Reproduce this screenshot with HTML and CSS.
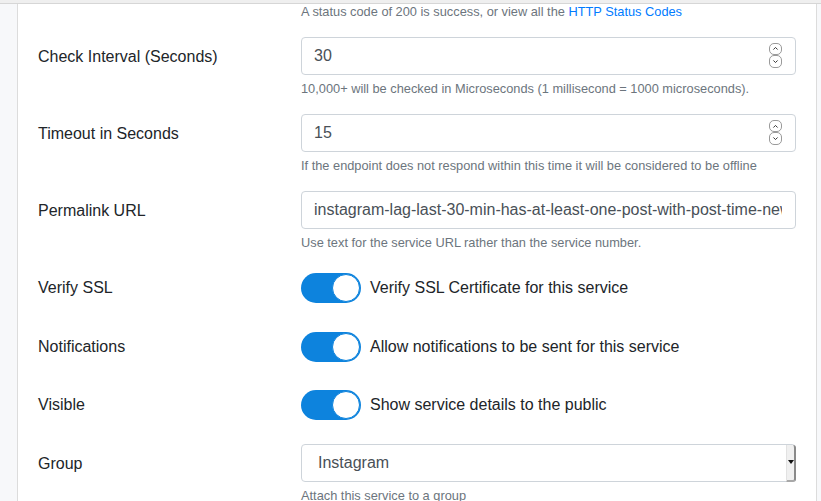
FILE: index.html
```html
<!DOCTYPE html>
<html>
<head>
<meta charset="utf-8">
<link rel="stylesheet" href="styles.css">
</head>
<body>
<div class="topbar"></div>
<div class="page">
  <div class="gutter"></div>
  <div class="card">
    <div class="row">
      <div class="label"></div>
      <div class="control">
        <small class="help first">A status code of 200 is success, or view all the <a href="#" class="link">HTTP Status Codes</a></small>
      </div>
    </div>

    <div class="row">
      <label class="label">Check Interval (Seconds)</label>
      <div class="control">
        <div class="field">
          <input class="input" type="text" value="30">
          <span class="spinner">
            <span class="spin"><svg viewBox="0 0 10 10" width="7" height="7"><path d="M2 6.5 L5 3.5 L8 6.5" fill="none" stroke="#333" stroke-width="1.4"/></svg></span>
            <span class="spin"><svg viewBox="0 0 10 10" width="7" height="7"><path d="M2 3.5 L5 6.5 L8 3.5" fill="none" stroke="#333" stroke-width="1.4"/></svg></span>
          </span>
        </div>
        <small class="help">10,000+ will be checked in Microseconds (1 millisecond = 1000 microseconds).</small>
      </div>
    </div>

    <div class="row">
      <label class="label">Timeout in Seconds</label>
      <div class="control">
        <div class="field">
          <input class="input" type="text" value="15">
          <span class="spinner">
            <span class="spin"><svg viewBox="0 0 10 10" width="7" height="7"><path d="M2 6.5 L5 3.5 L8 6.5" fill="none" stroke="#333" stroke-width="1.4"/></svg></span>
            <span class="spin"><svg viewBox="0 0 10 10" width="7" height="7"><path d="M2 3.5 L5 6.5 L8 3.5" fill="none" stroke="#333" stroke-width="1.4"/></svg></span>
          </span>
        </div>
        <small class="help">If the endpoint does not respond within this time it will be considered to be offline</small>
      </div>
    </div>

    <div class="row">
      <label class="label">Permalink URL</label>
      <div class="control">
        <div class="field">
          <input class="input" type="text" value="instagram-lag-last-30-min-has-at-least-one-post-with-post-time-newer-than-30-min">
        </div>
        <small class="help">Use text for the service URL rather than the service number.</small>
      </div>
    </div>

    <div class="row toggle-row">
      <label class="label">Verify SSL</label>
      <div class="control switch-line">
        <span class="switch"><span class="knob"></span></span>
        <span class="switch-text">Verify SSL Certificate for this service</span>
      </div>
    </div>

    <div class="row toggle-row">
      <label class="label">Notifications</label>
      <div class="control switch-line">
        <span class="switch"><span class="knob"></span></span>
        <span class="switch-text">Allow notifications to be sent for this service</span>
      </div>
    </div>

    <div class="row toggle-row">
      <label class="label">Visible</label>
      <div class="control switch-line">
        <span class="switch"><span class="knob"></span></span>
        <span class="switch-text">Show service details to the public</span>
      </div>
    </div>

    <div class="row">
      <label class="label">Group</label>
      <div class="control">
        <div class="field">
          <div class="select">Instagram</div>
          <span class="select-btn"><span class="tri"></span></span>
        </div>
        <small class="help">Attach this service to a group</small>
      </div>
    </div>
  </div>
  <div class="gutter right"></div>
</div>
</body>
</html>
```

FILE: styles.css
```css
html, body {
  margin: 0;
  padding: 0;
}
body {
  background: #f7f8fa;
  font-family: "Liberation Sans", Arial, sans-serif;
  color: #212529;
  overflow: hidden;
}
.topbar {
  position: fixed;
  top: 0;
  left: 0;
  right: 0;
  height: 3px;
  background: #efefef;
  border-bottom: 1px solid #d6d6d6;
  z-index: 5;
}
.page {
  display: flex;
  height: 501px;
}
.gutter {
  width: 17px;
  flex: none;
}
.gutter.right {
  flex: 1;
}
.card {
  width: 758px;
  flex: none;
  background: #fff;
  border-left: 1px solid #dcdcdc;
  border-right: 1px solid #dcdcdc;
  padding: 1.5px 20px 0 20px;
}
.row {
  display: grid;
  grid-template-columns: 263px 495px;
  margin-bottom: 16px;
}
.label {
  font-size: 16px;
  line-height: 24px;
  padding-top: 8px;
  color: #212529;
}
.control {
  display: flex;
  flex-direction: column;
}
.field {
  position: relative;
  height: 38px;
}
.input {
  box-sizing: border-box;
  width: 100%;
  height: 38px;
  border: 1px solid #ced4da;
  border-radius: 4px;
  padding: 6px 13px 6px 12px;
  font-family: "Liberation Sans", Arial, sans-serif;
  font-size: 16px;
  line-height: 24px;
  color: #495057;
  background: #fff;
  outline: none;
  margin: 0;
}
.spinner {
  position: absolute;
  right: 14px;
  top: 6px;
  width: 13px;
  display: flex;
  flex-direction: column;
}
.spin {
  box-sizing: border-box;
  height: 12.5px;
  width: 13px;
  border: 1px solid #9a9a9a;
  border-radius: 5px;
  display: flex;
  align-items: center;
  justify-content: center;
  background: #fff;
}
.help {
  display: block;
  margin-top: 4px;
  font-size: 12.8px;
  line-height: 19.2px;
  color: #6c757d;
}
.help.first {
  margin-top: 0;
}
.link {
  color: #007bff;
  text-decoration: none;
}
.toggle-row .control {
  padding: 5px 0 7.5px 0;
}
.switch-line {
  flex-direction: row !important;
  align-items: center;
}
.switch {
  position: relative;
  box-sizing: border-box;
  width: 60px;
  height: 30px;
  border-radius: 15px;
  background: #0d83dd;
  flex: none;
}
.knob {
  position: absolute;
  right: 1px;
  top: 1px;
  box-sizing: border-box;
  width: 28px;
  height: 28px;
  border-radius: 50%;
  background: #fff;
  border: 1px solid #0d83dd;
}
.switch-text {
  margin-left: 9px;
  font-size: 16px;
  line-height: 24px;
  color: #212529;
}
.select {
  box-sizing: border-box;
  height: 38px;
  border: 1px solid #ced4da;
  border-radius: 4px;
  padding: 6px 16px;
  font-size: 16px;
  line-height: 24px;
  color: #495057;
  background: #fff;
}
.select-btn {
  position: absolute;
  right: 0;
  top: 1px;
  bottom: 0;
  width: 10px;
  box-sizing: border-box;
  background: #f0f0f0;
  border-left: 1px solid #e2e2e2;
  border-right: 2px solid #8a8a8a;
  border-bottom: 2px solid #a8a8a8;
  border-radius: 0 3px 3px 0;
  display: flex;
  align-items: center;
  justify-content: center;
}
.tri {
  width: 0;
  height: 0;
  border-left: 3px solid transparent;
  border-right: 3px solid transparent;
  border-top: 4px solid #111;
}
```
